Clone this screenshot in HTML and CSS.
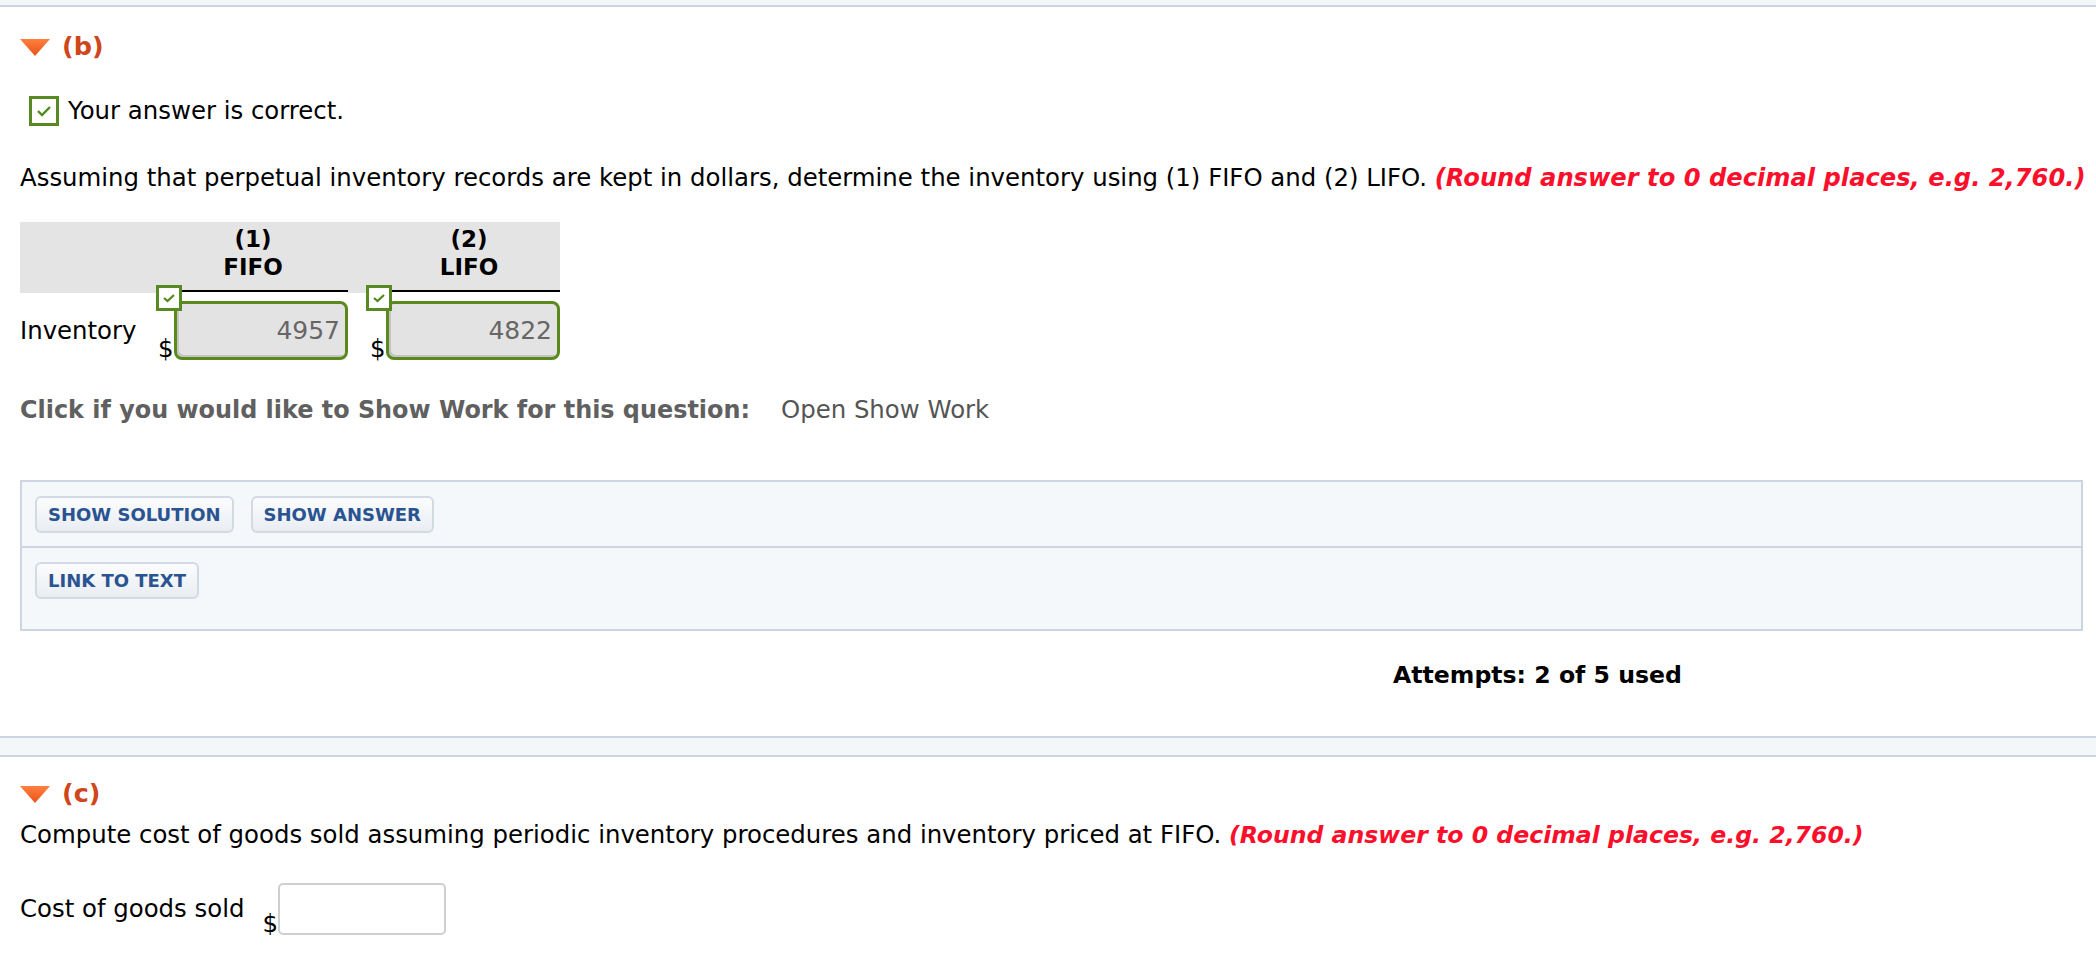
FILE: index.html
```html
<!DOCTYPE html>
<html lang="en">
<head>
<meta charset="utf-8">
<title>Question</title>
<link rel="stylesheet" href="styles.css">
</head>
<body>
<div class="band band-top"></div>

<section class="part">
  <div class="part-head">
    <svg class="tri" width="30" height="17" viewBox="0 0 30 17"><defs><linearGradient id="tg1" x1="0" y1="0" x2="0" y2="1"><stop offset="0" stop-color="#ff8040"/><stop offset="1" stop-color="#ea5218"/></linearGradient></defs><polygon points="0,0 30,0 15,17" fill="url(#tg1)"/></svg>
    <span class="part-label">(b)</span>
  </div>

  <div class="correct">
    <span class="chk chk-big"><svg width="16" height="12" viewBox="0 0 16 12"><polyline points="2,6 6,10 14,2" fill="none" stroke="#4f8a1c" stroke-width="2.4"/></svg></span>
    <span class="correct-text">Your answer is correct.</span>
  </div>

  <p class="question">Assuming that perpetual inventory records are kept in dollars, determine the inventory using (1) FIFO and (2) LIFO. <em class="hint">(Round answer to 0 decimal places, e.g. 2,760.)</em></p>

  <div class="inv-table">
    <div class="th"></div>
    <div class="th th-col">(1)<br>FIFO</div>
    <div class="th"></div>
    <div class="th th-col th-col-2">(2)<br>LIFO</div>

    <div class="td td-label">Inventory</div>
    <div class="td td-cell">
      <span class="chk chk-small"><svg width="14" height="10" viewBox="0 0 14 10"><polyline points="2,5 5.5,8 12,2" fill="none" stroke="#4f8a1c" stroke-width="2.2"/></svg></span>
      <span class="dollar">$</span>
      <span class="answer">4957</span>
    </div>
    <div class="td"></div>
    <div class="td td-cell td-cell-2">
      <span class="chk chk-small"><svg width="14" height="10" viewBox="0 0 14 10"><polyline points="2,5 5.5,8 12,2" fill="none" stroke="#4f8a1c" stroke-width="2.2"/></svg></span>
      <span class="dollar">$</span>
      <span class="answer">4822</span>
    </div>
  </div>

  <div class="showwork">
    <strong class="showwork-label">Click if you would like to Show Work for this question:</strong>
    <span class="showwork-link">Open Show Work</span>
  </div>

  <div class="panel">
    <div class="panel-row">
      <span class="btn">SHOW SOLUTION</span>
      <span class="btn">SHOW ANSWER</span>
    </div>
    <div class="panel-row panel-row-last">
      <span class="btn">LINK TO TEXT</span>
    </div>
  </div>

  <div class="attempts">Attempts: 2 of 5 used</div>
</section>

<div class="band band-mid"></div>

<section class="part part-c">
  <div class="part-head">
    <svg class="tri" width="30" height="17" viewBox="0 0 30 17"><defs><linearGradient id="tg2" x1="0" y1="0" x2="0" y2="1"><stop offset="0" stop-color="#ff8040"/><stop offset="1" stop-color="#ea5218"/></linearGradient></defs><polygon points="0,0 30,0 15,17" fill="url(#tg2)"/></svg>
    <span class="part-label">(c)</span>
  </div>

  <p class="question question-c">Compute cost of goods sold assuming periodic inventory procedures and inventory priced at FIFO. <em class="hint">(Round answer to 0 decimal places, e.g. 2,760.)</em></p>

  <div class="cogs">
    <span class="cogs-label">Cost of goods sold</span>
    <span class="dollar dollar-c">$</span>
    <span class="blank-input"></span>
  </div>
</section>
</body>
</html>
```

FILE: styles.css
```css
html, body {
  margin: 0;
  padding: 0;
  background: #ffffff;
}

body {
  font-family: "DejaVu Sans", Verdana, sans-serif;
  font-size: 24.4px;
  line-height: 28px;
  color: #000000;
}

.band {
  background: #f4f7fa;
  border-bottom: 2px solid #ccd4df;
}

.band-top {
  height: 5px;
}

.band-mid {
  height: 17px;
  border-top: 2px solid #ccd4df;
  margin-top: 47px;
}

.part {
  padding: 0 13px 0 20px;
}

.part-head {
  display: flex;
  align-items: center;
  gap: 12px;
  margin-top: 25px;
  height: 28px;
}

.tri {
  display: block;
  margin-top: 2px;
}

.part-label {
  font-weight: bold;
  font-size: 25.5px;
  color: #cf461a;
}

.correct {
  display: flex;
  align-items: center;
  gap: 9px;
  margin-top: 36px;
  padding-left: 9px;
  height: 30px;
}

.chk {
  display: flex;
  align-items: center;
  justify-content: center;
  box-sizing: border-box;
  background: #ffffff;
  border: 3px solid #588a22;
}

.chk-big {
  width: 30px;
  height: 30px;
}

.chk-small {
  width: 26px;
  height: 26px;
  position: absolute;
  left: -2px;
  top: -8px;
}

.question {
  margin: 38px 0 0 0;
  white-space: nowrap;
}

.hint {
  color: #fb0f2b;
  font-weight: bold;
  font-style: italic;
  font-size: 24.2px;
}

.question-c .hint {
  font-size: 23.6px;
}

.inv-table {
  display: grid;
  grid-template-columns: 138px 190px 20px 192px;
  grid-template-rows: 71px auto;
  margin-top: 30px;
}

.th {
  background: #e4e4e4;
}

.th-col {
  box-sizing: border-box;
  border-bottom: 2px solid #000000;
  margin-bottom: 1px;
  font-weight: bold;
  font-size: 23px;
  text-align: center;
  padding: 3px 0 0 0;
}

.th-col-2 {
  padding-left: 10px;
}

.td-label {
  display: flex;
  align-items: center;
  padding-top: 8px;
}

.td-cell {
  position: relative;
  display: flex;
  align-items: flex-end;
  padding-top: 8px;
}

.td-cell-2 {
  padding-left: 2px;
}

.dollar {
  width: 16px;
  line-height: 22px;
}

.answer {
  flex: 1;
  box-sizing: border-box;
  height: 59px;
  border: 3px solid #5a8a1c;
  border-radius: 8px;
  background: #e3e3e3;
  box-shadow: inset 2px -2px 0 #c4c4c4;
  color: #666666;
  font-size: 25px;
  text-align: right;
  padding: 13px 5px 0 0;
}

.showwork {
  display: flex;
  gap: 31px;
  margin-top: 36px;
}

.showwork-label {
  color: #606060;
  font-size: 23.9px;
}

.showwork-link {
  color: #555555;
}

.panel {
  margin-top: 56px;
  border: 2px solid #cdd5e0;
  background: #f5f8fb;
}

.panel-row {
  display: flex;
  gap: 17px;
  padding: 14px 13px 13px 13px;
}

.panel-row-last {
  border-top: 2px solid #cdd5e0;
  padding-bottom: 30px;
}

.btn {
  box-sizing: border-box;
  height: 37px;
  padding: 0 11px;
  display: flex;
  align-items: center;
  border: 2px solid #d3dae3;
  border-radius: 6px;
  background: linear-gradient(#fbfcfd, #e9edf2);
  color: #2a5391;
  font-weight: bold;
  font-size: 18px;
}

.attempts {
  margin-top: 30px;
  padding-left: 1373px;
  font-weight: bold;
  font-size: 23.6px;
}

.part-c .part-head {
  margin-top: 22px;
}

.question-c {
  margin-top: 14px;
}

.cogs {
  display: flex;
  align-items: flex-end;
  margin-top: 34px;
}

.cogs-label {
  align-self: center;
  white-space: nowrap;
  flex: none;
}

.dollar-c {
  margin-left: 18px;
}

.blank-input {
  box-sizing: border-box;
  width: 168px;
  height: 52px;
  border: 2px solid #cfcfcf;
  border-radius: 5px;
  background: #ffffff;
}
```
